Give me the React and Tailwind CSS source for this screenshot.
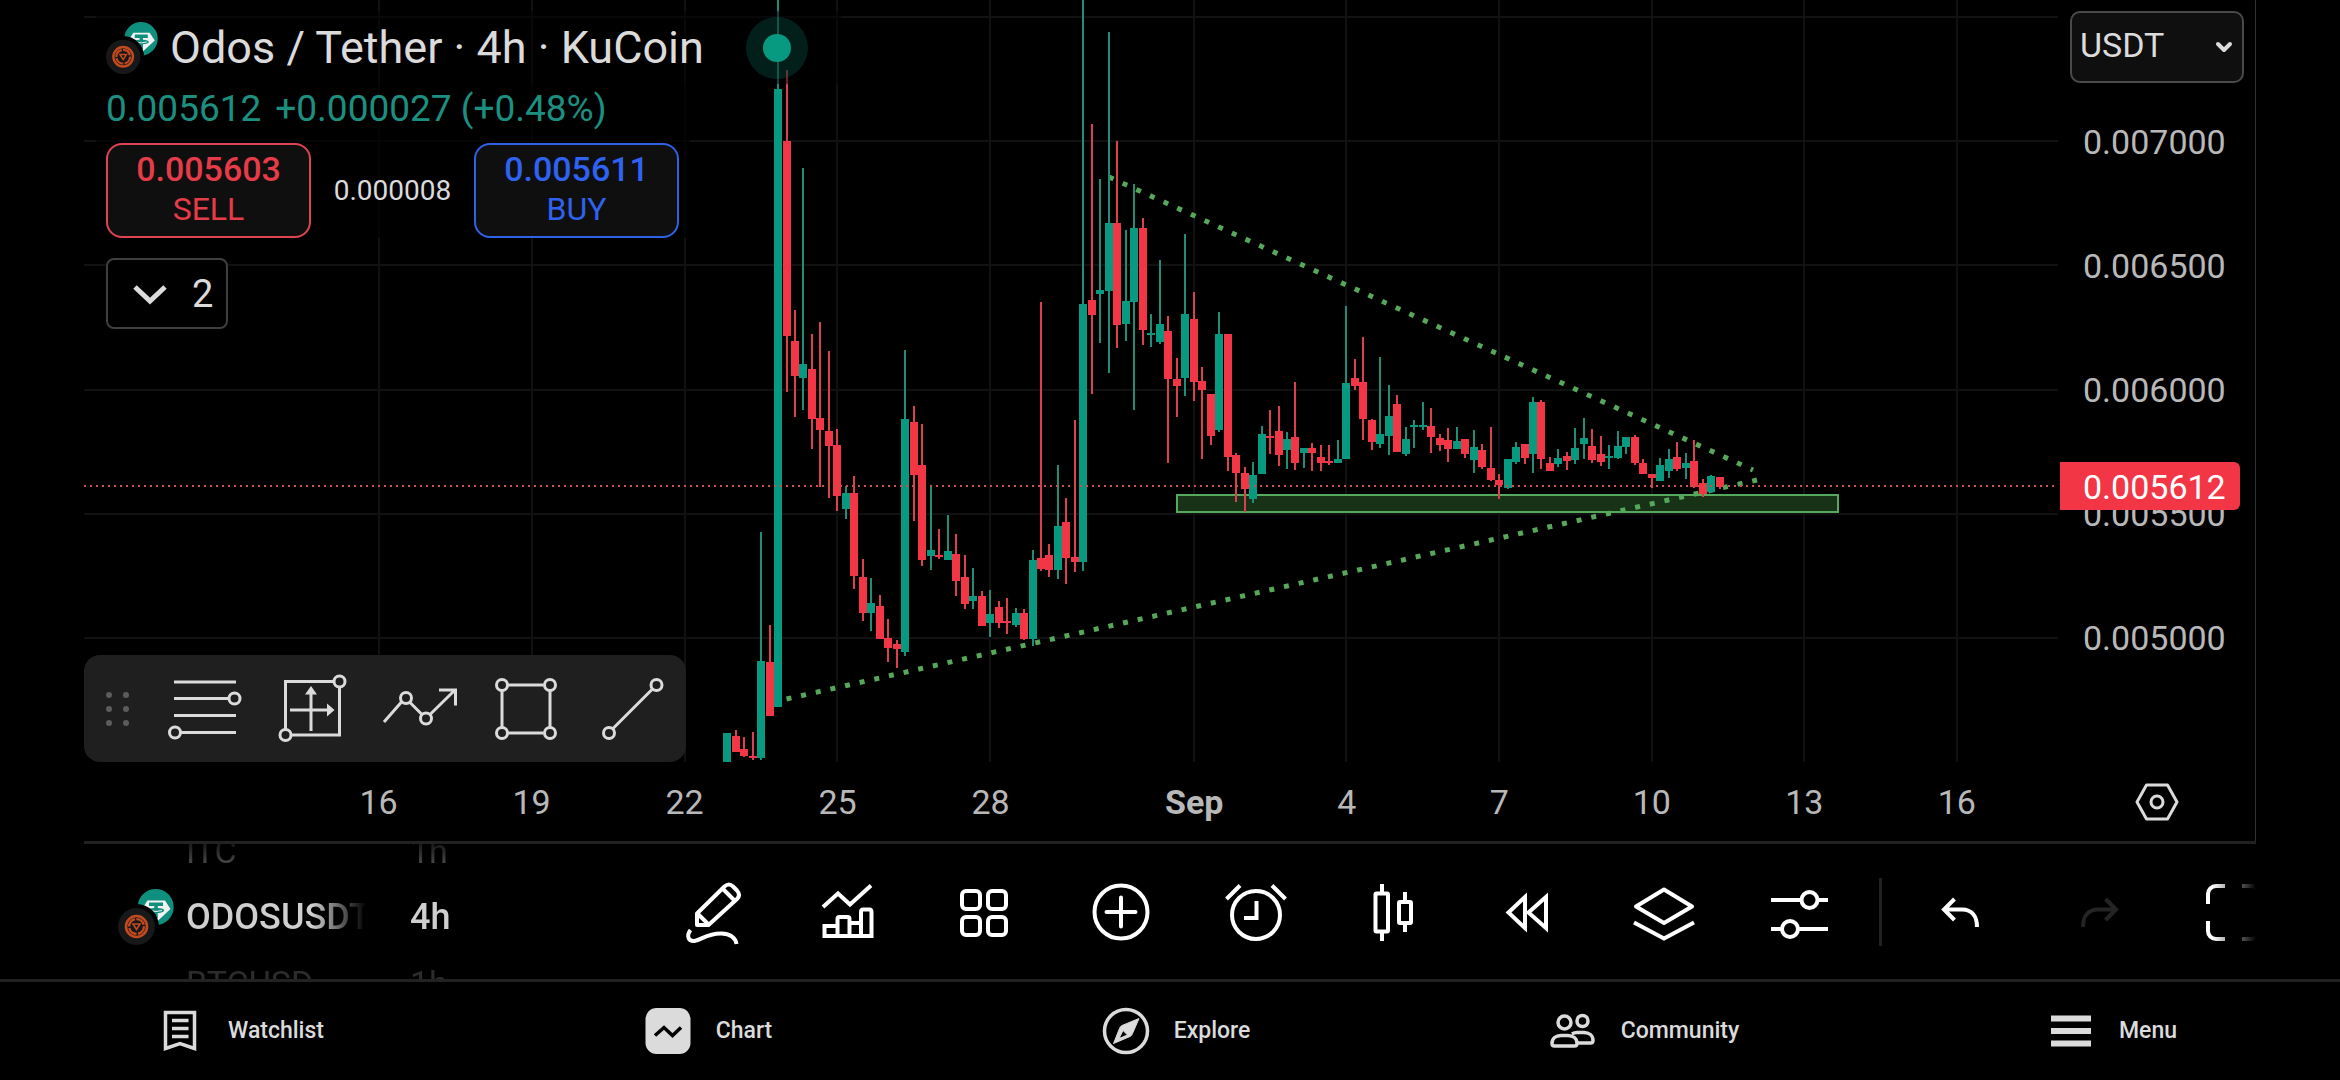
import React from "react";
import { ChevronDown } from "lucide-react";

/* ---------- chart data ---------- */

const PLOT = { left: 84, width: 1974, height: 762 };

// [wick top, wick bottom, body top, body bottom, rising]
const CANDLES = [
  [733, 762, 733, 762, 1], [730, 752, 736, 752, 0], [737, 757, 749, 756, 0], [732, 760, 756, 758, 0],
  [532, 760, 661, 758, 1], [625, 716, 662, 716, 0], [0, 707, 89, 707, 1], [70, 392, 141, 336, 0],
  [310, 417, 341, 376, 0], [168, 410, 364, 378, 1], [334, 449, 369, 419, 0], [322, 487, 418, 430, 0],
  [351, 498, 431, 446, 0], [429, 511, 445, 496, 0], [486, 519, 493, 509, 1], [476, 589, 493, 576, 0],
  [559, 621, 577, 613, 0], [578, 631, 603, 613, 1], [595, 639, 606, 639, 0], [619, 662, 638, 648, 0],
  [640, 668, 644, 649, 0], [350, 656, 419, 652, 1], [406, 521, 422, 475, 0], [424, 566, 465, 560, 0],
  [486, 570, 550, 556, 1], [529, 559, 555, 557, 0], [515, 560, 551, 560, 1], [534, 596, 554, 581, 0],
  [555, 609, 577, 604, 0], [568, 609, 596, 601, 1], [591, 626, 596, 626, 0], [590, 637, 614, 623, 1],
  [601, 628, 607, 623, 0], [598, 634, 621, 623, 0], [608, 627, 613, 625, 1], [609, 640, 613, 639, 0],
  [550, 646, 560, 639, 1], [302, 571, 558, 569, 0], [544, 577, 555, 570, 0], [465, 579, 526, 570, 1],
  [498, 584, 522, 558, 0], [420, 572, 557, 562, 0], [0, 571, 304, 562, 1], [124, 394, 300, 315, 0],
  [179, 343, 290, 294, 1], [32, 373, 223, 291, 1], [141, 348, 223, 325, 0], [230, 341, 301, 324, 1],
  [184, 410, 228, 302, 1], [218, 345, 228, 330, 0], [314, 347, 333, 335, 1], [260, 344, 324, 342, 1],
  [316, 463, 331, 379, 0], [358, 417, 379, 386, 0], [234, 396, 314, 378, 1], [292, 401, 319, 382, 0],
  [367, 459, 381, 390, 0], [394, 445, 394, 436, 0], [312, 432, 334, 430, 1], [334, 471, 334, 457, 0],
  [453, 502, 455, 473, 0], [467, 512, 473, 489, 0], [462, 503, 475, 499, 1], [426, 474, 434, 474, 1],
  [410, 454, 436, 438, 0], [406, 466, 431, 455, 0], [432, 469, 439, 450, 1], [382, 470, 437, 463, 0],
  [448, 468, 448, 453, 1], [443, 471, 448, 453, 0], [445, 471, 457, 463, 0], [445, 465, 461, 463, 0],
  [440, 463, 459, 463, 1], [306, 459, 383, 459, 1], [359, 390, 378, 386, 0], [337, 440, 382, 419, 0],
  [419, 450, 420, 442, 0], [357, 448, 434, 444, 1], [385, 455, 416, 436, 1], [395, 452, 404, 452, 0],
  [427, 456, 439, 454, 1], [420, 448, 425, 427, 1], [402, 430, 425, 427, 1], [408, 453, 426, 437, 0],
  [434, 451, 438, 445, 0], [428, 462, 440, 449, 0], [427, 449, 441, 449, 1], [439, 458, 439, 454, 0],
  [430, 473, 447, 460, 1], [444, 469, 450, 467, 0], [427, 481, 468, 480, 0], [474, 499, 480, 485, 0],
  [459, 489, 459, 488, 1], [442, 464, 447, 462, 1], [444, 464, 444, 458, 0], [397, 473, 402, 454, 1],
  [400, 469, 402, 459, 0], [457, 471, 463, 471, 0], [449, 467, 458, 464, 1], [452, 470, 456, 461, 0],
  [428, 464, 448, 460, 1], [418, 459, 438, 444, 1], [429, 463, 446, 460, 0], [436, 466, 454, 462, 0],
  [445, 469, 456, 458, 1], [431, 459, 446, 458, 1], [437, 454, 437, 447, 1], [435, 465, 437, 463, 0],
  [459, 474, 463, 474, 0], [474, 488, 474, 478, 0], [458, 481, 465, 481, 1], [449, 478, 459, 471, 1],
  [442, 471, 457, 469, 0], [453, 479, 463, 468, 1], [440, 488, 461, 487, 0], [479, 497, 483, 494, 0],
  [475, 493, 476, 492, 1], [477, 489, 477, 487, 0],
];
const candleX = (i) => Math.floor(727.62 + i * 8.483);

const GRID_X = [379, 532, 685, 837, 990, 1194, 1346, 1499, 1652, 1804, 1957];
const GRID_Y = [17, 141, 265, 390, 514, 638];
const PRICE_Y = 486;

function Chart() {
  return (
    <svg
      className="absolute inset-0 h-full w-full"
      viewBox={`${PLOT.left} 0 ${PLOT.width} ${PLOT.height}`}
      preserveAspectRatio="none"
      role="img"
      aria-label="Odos / Tether 4h candlestick chart"
    >
      <g fill="#111111">
        {GRID_X.map((x) => <rect key={x} x={x - 1} y="0" width="2" height="762" />)}
        {GRID_Y.map((y) => <rect key={y} x="84" y={y - 1} width="1974" height="2" />)}
      </g>
      <rect x="1177" y="495" width="661" height="17" fill="#173217" stroke="#56a85a" strokeWidth="2" />
      <g stroke="#56a85a" strokeWidth="5" strokeDasharray="5 10">
        <path d="M1109 177L1753 470" />
        <path d="M786.5 699L1757 480" />
      </g>
      {CANDLES.map(([wt, wb, bt, bb, up], i) => {
        const x = candleX(i);
        return (
          <g key={i}>
            <rect x={x - 1} y={wt} width="2" height={wb - wt} fill={up ? "#1f8d78" : "#dc404c"} />
            <rect x={x - 4} y={bt} width="8" height={bb - bt} fill={up ? "#089981" : "#f23645"} />
          </g>
        );
      })}
      <path d={`M84 ${PRICE_Y}H2057`} stroke="#c8504f" strokeWidth="2" strokeDasharray="2 4" />
    </svg>
  );
}

/* ---------- logos ---------- */

function PairLogo({ className }) {
  return (
    <svg viewBox="0 0 56 56" className={className} aria-hidden="true">
      <circle cx="37.7" cy="18" r="18" fill="#0f8f7e" />
      <path d="M29.5 11.5h17.5l5.5 8.5L38 33.5 24 20z" fill="#f2f2f2" />
      <path d="M31 13.5h14v3.6h-5.2v2c4 .3 6.4 1.2 6.4 2.4s-2.7 2.3-6.4 2.5v5h-3.6v-5c-3.7-.2-6.4-1.3-6.4-2.5s2.4-2.1 6.4-2.4v-2H31z" fill="#0f8f7e" />
      <path d="M32 21.5q6 2 12 0" stroke="#f2f2f2" strokeWidth="1" fill="none" />
      <circle cx="18.5" cy="37.5" r="22.5" fill="#000" />
      <circle cx="18.5" cy="37.5" r="18.5" fill="#17181a" />
      <g fill="none" stroke="#c24a1d">
        <circle cx="18.5" cy="37.5" r="10.5" strokeWidth="2.6" />
        <circle cx="18.5" cy="37.5" r="7.4" strokeWidth="2.4" strokeDasharray="10 1.5" />
        <path d="M15 35h7l-3.5 5.5z" strokeWidth="1.6" />
      </g>
    </svg>
  );
}

/* ---------- line icons ---------- */

function Stroke({ children, className = "", width = 4, box = 64 }) {
  return (
    <svg
      viewBox={`0 0 ${box} ${box}`}
      className={`shrink-0 overflow-visible ${className}`}
      fill="none"
      stroke="currentColor"
      strokeWidth={width}
      aria-hidden="true"
    >
      {children}
    </svg>
  );
}

const DRAW_TOOLS = [
  ["Fib retracement", <>
    <path d="M1 5h62M1 21.5h55M1 38.5h62M7 55.5h56" />
    <circle cx="61.5" cy="21.5" r="5.5" /><circle cx="2" cy="55.5" r="5.5" />
  </>],
  ["Price range", <>
    <path d="M54 4.5H5.5V52M11.5 58H59.5V10" />
    <circle cx="59.5" cy="4.5" r="5.5" /><circle cx="5.5" cy="58" r="5.5" />
    <path d="M31 54V14M10 33H48" />
    <path d="M31 9l6 8.5H25zM54.5 33l-7.500-6.500v13z" fill="currentColor" stroke="none" />
  </>],
  ["Trend arrow", <>
    <path d="M-3 45L14.5 25M23 25.5l12 12M43 37.5L68 13M52 13H68.5V28.5" />
    <circle cx="19" cy="21" r="5.5" /><circle cx="39" cy="41.5" r="5.5" />
  </>],
  ["Rectangle", <>
    <path d="M13.5 8h36M13.5 56h36M8 13.5v37M56 13.5v37" />
    <circle cx="8" cy="8" r="5.5" /><circle cx="56" cy="8" r="5.5" />
    <circle cx="8" cy="56" r="5.5" /><circle cx="56" cy="56" r="5.5" />
  </>],
  ["Trend line", <>
    <path d="M11.5 52L51.5 12" />
    <circle cx="55.5" cy="8" r="5.5" /><circle cx="8" cy="56" r="5.5" />
  </>],
];

const TOOLS = [
  ["Draw", <>
    <path d="M17 45V33.5L44.5 6.5q4.5-4 8.5 0l4 4q4 4.5 0 8.5L28.5 45Z" strokeLinejoin="round" />
    <path d="M43 9l12 12M18 34l11 11" />
    <path d="M10.5 50c-4.5 6-2 11.5 4 11 7-1 13-8 27-7.5 9 .5 14 4.5 15 10.5" />
  </>],
  ["Indicators", <>
    <path d="M7 27L22 13.5 34 24.5 55 5.5" />
    <path d="M8.5 56V46H21.5V39q0-2 2-2h8q2 0 2 2V43H45V32q0-2.5 2-2.5h6.5q2 0 2 2.5V56ZM21.5 46V56M33.5 43V56M45 43V56" />
  </>],
  ["Layouts", <>
    <rect x="10" y="11" width="18" height="18" rx="4" /><rect x="36" y="11" width="18" height="18" rx="4" />
    <rect x="10" y="37" width="18" height="18" rx="4" /><rect x="36" y="37" width="18" height="18" rx="4" />
  </>],
  ["Add", <>
    <circle cx="33" cy="32" r="26.5" />
    <path d="M33 17.5v29M18.5 32h29" strokeLinecap="round" />
  </>],
  ["Alerts", <>
    <circle cx="32" cy="35" r="24" />
    <path d="M32.5 21V38H20M2.5 19L16 5.5M48 5.5L61.5 19" />
  </>],
  ["Chart type", <>
    <rect x="15.5" y="13.5" width="12.5" height="38" rx="1" /><rect x="39" y="22" width="12" height="21" rx="1" />
    <path d="M22 4v9M22 52v9M45 12v10M45 43v9" />
  </>],
  ["Replay", <path d="M12.500 32.500L29 17V48ZM32.500 32.500L50 17V48Z" />],
  ["Objects", <>
    <path d="M32 9.5L60 26.5 32 43 4 26.5Z" strokeLinejoin="round" />
    <path d="M2 42.5L32 58.5 62 42.5" />
  </>],
  ["Settings", <>
    <path d="M3 20h30M49.5 20H60M3 49h11M30.5 49H60" />
    <circle cx="41.5" cy="20" r="8" /><circle cx="22" cy="49" r="8" />
  </>],
];
const TAIL_TOOLS = [
  ["Undo", "text-white", <path d="M15 29.5H33c10 0 15 7 15 17.5M25.5 19L15 29.5l10.5 10.5" />],
  ["Redo", "text-[#242424]", <path d="M51 29.5H33c-10 0-15 7-15 17.5M40.5 19L51 29.5 40.5 40" />],
  ["Fullscreen", "text-white", <path d="M7 24V14a8 8 0 0 1 8-8h9M41 6h9a8 8 0 0 1 8 8v10M58 41v10a8 8 0 0 1-8 8h-9M24 59H15a8 8 0 0 1-8-8V41" />],
];

/* ---------- bottom navigation ---------- */

const NAV = [
  ["Watchlist", <>
    <path d="M9.5 5.5h29v36l-14.5-5-14.5 5z" />
    <path d="M16 13.5h16.5M16 21.5h16.5M16 29.5h16.5" />
  </>],
  ["Chart", <>
    <rect x="1.5" y="1" width="45" height="46" rx="11" fill="currentColor" stroke="none" />
    <path d="M11 28.5L20 20.5 28.5 28.5 37 20.5" stroke="#000" />
  </>],
  ["Explore", <>
    <circle cx="24" cy="24" r="21.5" />
    <path fillRule="evenodd" d="M37 11.5L20 18.5q-2 1-2.5 3L11.5 36.500 28 29.500q2-1 2.500-3zM21 23.500l4.500 4.500-8.500 3.500z" fill="currentColor" strokeWidth="1" />
  </>],
  ["Community", <>
    <circle cx="15.5" cy="15.5" r="6.5" /><circle cx="33.5" cy="14" r="5.5" />
    <path d="M3 36.5c0-5 4-8 9-8h7c5 0 9 3 9 8q0 2.5-2.5 2.5h-20Q3 39 3 36.5zM23 27c1.5-1 3.5-1.5 5-1.5h7c5 0 9 3 9 8q0 2.5-2.5 2.5H28" />
  </>],
  ["Menu", <path d="M4 11.5h40M4 24h40M4 36.5h40" strokeWidth="6" />],
];

/* ---------- axes ---------- */

const PRICES = ["0.007000", "0.006500", "0.006000", "0.005500", "0.005000"];

function PriceAxis() {
  return (
    <div className="relative flex flex-1 flex-col text-[34px] leading-none text-[#b8b8b8]">
      <div className="min-h-0 flex-[80] basis-0">
        <div className="relative ml-3 mt-[11px] h-[72px] w-[174px]">
          <select aria-label="Currency" defaultValue="USDT" className="h-full w-full appearance-none rounded-[10px] border-2 border-[#4a4a4a] bg-[#0f0f0f] pb-1 pl-2 text-[34px] text-[#dbdbdb]">
            <option>USDT</option>
          </select>
          <ChevronDown className="pointer-events-none absolute right-2 top-6 h-6 w-6 text-[#dbdbdb]" strokeWidth={4} />
        </div>
      </div>
      {PRICES.map((p) => (
        <div key={p} className="flex flex-[124] basis-0 items-center pl-[25px]">{p}</div>
      ))}
      <div className="flex-[62] basis-0" />
      <div
        className="absolute left-0.5 flex h-12 w-[180px] -translate-y-1/2 items-center rounded-r-md bg-[#f23645] pl-[23px] pt-0.5 text-white"
        style={{ top: `${(PRICE_Y / PLOT.height) * 100}%` }}
      >
        0.005612
      </div>
    </div>
  );
}

function DateAxis() {
  return (
    <div className="flex flex-[1974] basis-0 text-center">
      <span className="flex-[436] basis-0" />
      {["16", "19", "22", "25", "28"].map((d) => <span key={d} className="flex-[306] basis-0">{d}</span>)}
      <span className="flex-[102] basis-0" />
      <span className="flex-[305] basis-0 font-bold">Sep</span>
      {["4", "7", "10", "13", "16"].map((d) => <span key={d} className="flex-[305] basis-0">{d}</span>)}
      <span className="flex-[50] basis-0" />
    </div>
  );
}

/* ---------- overlays on the chart ---------- */

function Legend() {
  return (
    <section className="ml-3 flex flex-col items-start self-start pt-[11px]">
      <div className="flex h-[73px] w-[745px] items-center bg-black/50 pl-[10px]">
        <PairLogo className="h-[52px] w-[52px] shrink-0" />
        <h1 className="ml-3 whitespace-nowrap text-[45px] leading-none text-[#dbdbdb]">Odos / Tether · 4h · KuCoin</h1>
        <span className="ml-auto mr-[33px] flex h-[62px] w-[62px] items-center justify-center rounded-full bg-[#089981]/20">
          <span className="h-7 w-7 rounded-full bg-[#089981]" />
        </span>
      </div>
      <div className="w-[594px] bg-black/70 pl-[10px]">
        <p className="flex h-12 items-center gap-[14px] text-[37px] leading-none text-[#1c9080]">
          <span>0.005612</span>
          <span>+0.000027 (+0.48%)</span>
        </p>
        <div className="mt-[11px] flex h-[95px] items-center">
          <button className="flex h-full w-[205px] flex-col items-center justify-center gap-1 rounded-2xl border-2 border-[#e04450] bg-[#0f0f0f] pb-1 text-[#e63c49]">
            <span className="text-[34px] font-medium leading-9">0.005603</span>
            <span className="text-[32px] leading-9">SELL</span>
          </button>
          <span className="w-[163px] text-center text-[28px] text-[#dbdbdb]">0.000008</span>
          <button className="flex h-full w-[205px] flex-col items-center justify-center gap-1 rounded-2xl border-2 border-[#2f62e6] bg-[#0f0f0f] pb-1 text-[#2f62f0]">
            <span className="text-[34px] font-medium leading-9">0.005611</span>
            <span className="text-[32px] leading-9">BUY</span>
          </button>
        </div>
      </div>
      <button aria-label="Show 2 indicators" className="ml-[10px] mt-5 flex h-[71px] w-[122px] items-center rounded-lg border-2 border-[#3f3f3f] bg-black pl-6 text-[#dbdbdb]">
        <Stroke className="h-9 w-9" box={36}><path d="M3 11L18 25 33 11" strokeWidth="5" /></Stroke>
        <span className="ml-6 text-[38px] leading-none">2</span>
      </button>
    </section>
  );
}

function DrawingBar() {
  return (
    <div className="flex h-[107px] w-[602px] items-center rounded-2xl bg-[#1f1f1f] pl-[22px]">
      <span className="grid grid-cols-2 gap-x-[11px] gap-y-2">
        {[0, 1, 2, 3, 4, 5].map((i) => <i key={i} className="h-1.5 w-1.5 rounded-full bg-[#5c5c5c]" />)}
      </span>
      <div className="ml-[22px] flex">
        {DRAW_TOOLS.map(([name, art]) => (
          <button key={name} aria-label={name} className="flex h-[107px] w-[107px] items-center justify-center text-[#dbdbdb]">
            <Stroke className="h-16 w-16" width={3}>{art}</Stroke>
          </button>
        ))}
      </div>
    </div>
  );
}

/* ---------- symbol and interval wheels ---------- */

function SymbolPicker() {
  return (
    <div className="h-[135px] w-[560px] shrink-0 overflow-hidden">
      <div className="flex h-full flex-col justify-center pt-[10px] text-[34px] leading-[66px]">
        <div className="flex bg-gradient-to-b from-[#1a1a1a] from-40% to-[#4a4a4a] to-70% bg-clip-text pl-[102px] text-transparent">
          <span className="w-[224px]">ITC</span><span>1h</span>
        </div>
        <div className="flex items-center text-[36px] font-medium">
          <PairLogo className="ml-[34px] h-14 w-14" />
          <span className="ml-3 w-[180px] overflow-hidden bg-gradient-to-r from-[#cfcfcf] from-70% to-transparent to-100% bg-clip-text text-transparent">ODOSUSDT</span>
          <span className="ml-[44px] text-[#cfcfcf]">4h</span>
        </div>
        <div className="flex pl-[102px] text-[#2c2c2c]">
          <span className="w-[224px]">BTCUSD</span><span>1h</span>
        </div>
      </div>
    </div>
  );
}

export default function App() {
  return (
    <div className="flex min-h-screen flex-col overflow-hidden bg-black font-['Roboto',sans-serif]">
      <main className="mx-[84px] flex flex-1 flex-col border-r border-[#333333]">
        <div className="flex flex-1">
          <div className="relative flex min-w-0 flex-[1974] basis-0 flex-col justify-between">
            <Chart />
            <div className="relative"><Legend /></div>
            <div className="relative"><DrawingBar /></div>
          </div>
          <div className="flex flex-[197] basis-0"><PriceAxis /></div>
        </div>
        <div className="flex h-[79px] items-center text-[34px] leading-none text-[#b8b8b8]">
          <DateAxis />
          <div className="flex flex-[197] basis-0 justify-center">
            <button aria-label="Chart settings" className="text-[#dbdbdb]">
              <Stroke className="h-11 w-11" width={3} box={44}>
                <path d="M11.5 5H32.5L42 22 32.5 39H11.5L2 22Z" strokeLinejoin="round" />
                <circle cx="22" cy="22" r="6" />
              </Stroke>
            </button>
          </div>
        </div>
      </main>

      <div className="mx-[84px] border-t-3 border-[#222222]">
        <div className="flex items-center overflow-hidden [mask-image:linear-gradient(to_right,black_calc(100%-44px),transparent)]">
          <SymbolPicker />
          {TOOLS.map(([name, art]) => (
            <button key={name} aria-label={name} className="flex h-[135px] w-[136px] shrink-0 items-center justify-center text-white">
              <Stroke className="h-16 w-16">{art}</Stroke>
            </button>
          ))}
          <span className="mx-[11px] h-[68px] w-[3px] shrink-0 bg-[#222222]" />
          {TAIL_TOOLS.map(([name, tone, art]) => (
            <button key={name} aria-label={name} className={`flex h-[135px] w-[136px] shrink-0 items-center justify-center ${tone}`}>
              <Stroke className="h-16 w-16">{art}</Stroke>
            </button>
          ))}
        </div>
      </div>

      <nav className="flex h-[101px] border-t-3 border-[#222222]">
        {NAV.map(([name, art]) => (
          <a key={name} href={`#${name.toLowerCase()}`} className="flex flex-1 items-center justify-center gap-6 pl-3 text-[23px] font-medium text-[#dbdbdb]">
            <Stroke className="h-12 w-12" width={3.5} box={48}>{art}</Stroke>
            {name}
          </a>
        ))}
      </nav>
    </div>
  );
}
